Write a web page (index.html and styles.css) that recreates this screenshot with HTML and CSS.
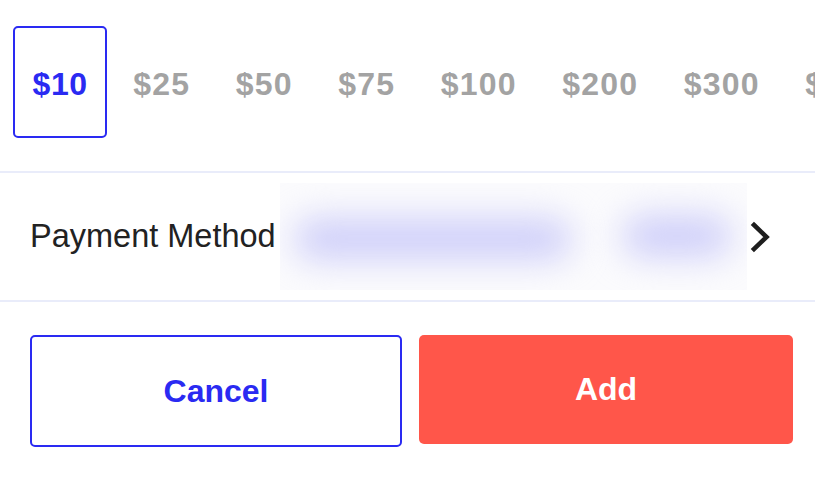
FILE: index.html
```html
<!DOCTYPE html>
<html>
<head>
<meta charset="utf-8">
<link rel="stylesheet" href="styles.css">
</head>
<body>
<div class="page">
  <div class="amounts">
    <div class="amount selected">$10</div>
    <div class="amount">$25</div>
    <div class="amount">$50</div>
    <div class="amount">$75</div>
    <div class="amount">$100</div>
    <div class="amount">$200</div>
    <div class="amount">$300</div>
    <div class="amount">$500</div>
  </div>
  <div class="payment">
    <span class="label">Payment Method</span>
    <div class="masked">
      <div class="blob blob-long"></div>
      <div class="blob blob-short"></div>
    </div>
    <svg class="chevron" width="22" height="32" viewBox="0 0 22 32">
      <path d="M4 4 L16.5 16 L4 28" fill="none" stroke="#1e1e1e" stroke-width="4.6" stroke-linecap="square" stroke-linejoin="miter"/>
    </svg>
  </div>
  <div class="actions">
    <button class="btn btn-cancel">Cancel</button>
    <button class="btn btn-add">Add</button>
  </div>
</div>
</body>
</html>
```
FILE: styles.css
```css
html, body {
  margin: 0;
  padding: 0;
  background: #ffffff;
}
.page {
  width: 815px;
  height: 483px;
  overflow: hidden;
  font-family: "Liberation Sans", Arial, sans-serif;
}
.amounts {
  display: flex;
  align-items: center;
  gap: 6.5px;
  padding: 26px 0 33px 13px;
  white-space: nowrap;
}
.amount {
  box-sizing: border-box;
  height: 112px;
  display: flex;
  align-items: center;
  padding: 4px 17.5px 0;
  border: 2px solid transparent;
  border-radius: 5px;
  font-size: 32px;
  font-weight: 700;
  color: #a3a3a3;
  letter-spacing: 1.2px;
  flex: none;
}
.amount.selected {
  border-color: #2a2af2;
  color: #2a2af2;
  letter-spacing: 0.6px;
}
.payment {
  display: flex;
  align-items: center;
  height: 127px;
  border-top: 2px solid #e9ecfa;
  border-bottom: 2px solid #e9ecfa;
  padding-left: 30px;
}
.label {
  font-size: 32.5px;
  color: #222222;
  white-space: nowrap;
  width: 250px;
  flex: none;
}
.masked {
  width: 467px;
  height: 107px;
  background: #fbfbfd;
  display: flex;
  align-items: center;
  padding-left: 14px;
  gap: 50px;
  box-sizing: border-box;
  overflow: hidden;
  flex: none;
}
.blob {
  height: 42px;
  border-radius: 21px;
  background: #cfcff9;
  filter: blur(17px);
  margin-top: 4px;
}
.blob-long {
  width: 278px;
}
.blob-short {
  width: 110px;
  margin-top: -2px;
}
.chevron {
  margin-left: 3px;
  flex: none;
}
.actions {
  display: flex;
  align-items: flex-start;
  gap: 17px;
  padding: 33px 0 0 30px;
}
.btn {
  flex: none;
  box-sizing: border-box;
  border-radius: 5px;
  font-family: "Liberation Sans", Arial, sans-serif;
  font-size: 32px;
  font-weight: 700;
  cursor: pointer;
}
.btn-cancel {
  width: 372px;
  height: 112px;
  background: #ffffff;
  border: 2px solid #2a2af2;
  color: #2a2af2;
}
.btn-add {
  width: 374px;
  height: 109px;
  background: #ff564a;
  border: none;
  color: #ffffff;
}
```
